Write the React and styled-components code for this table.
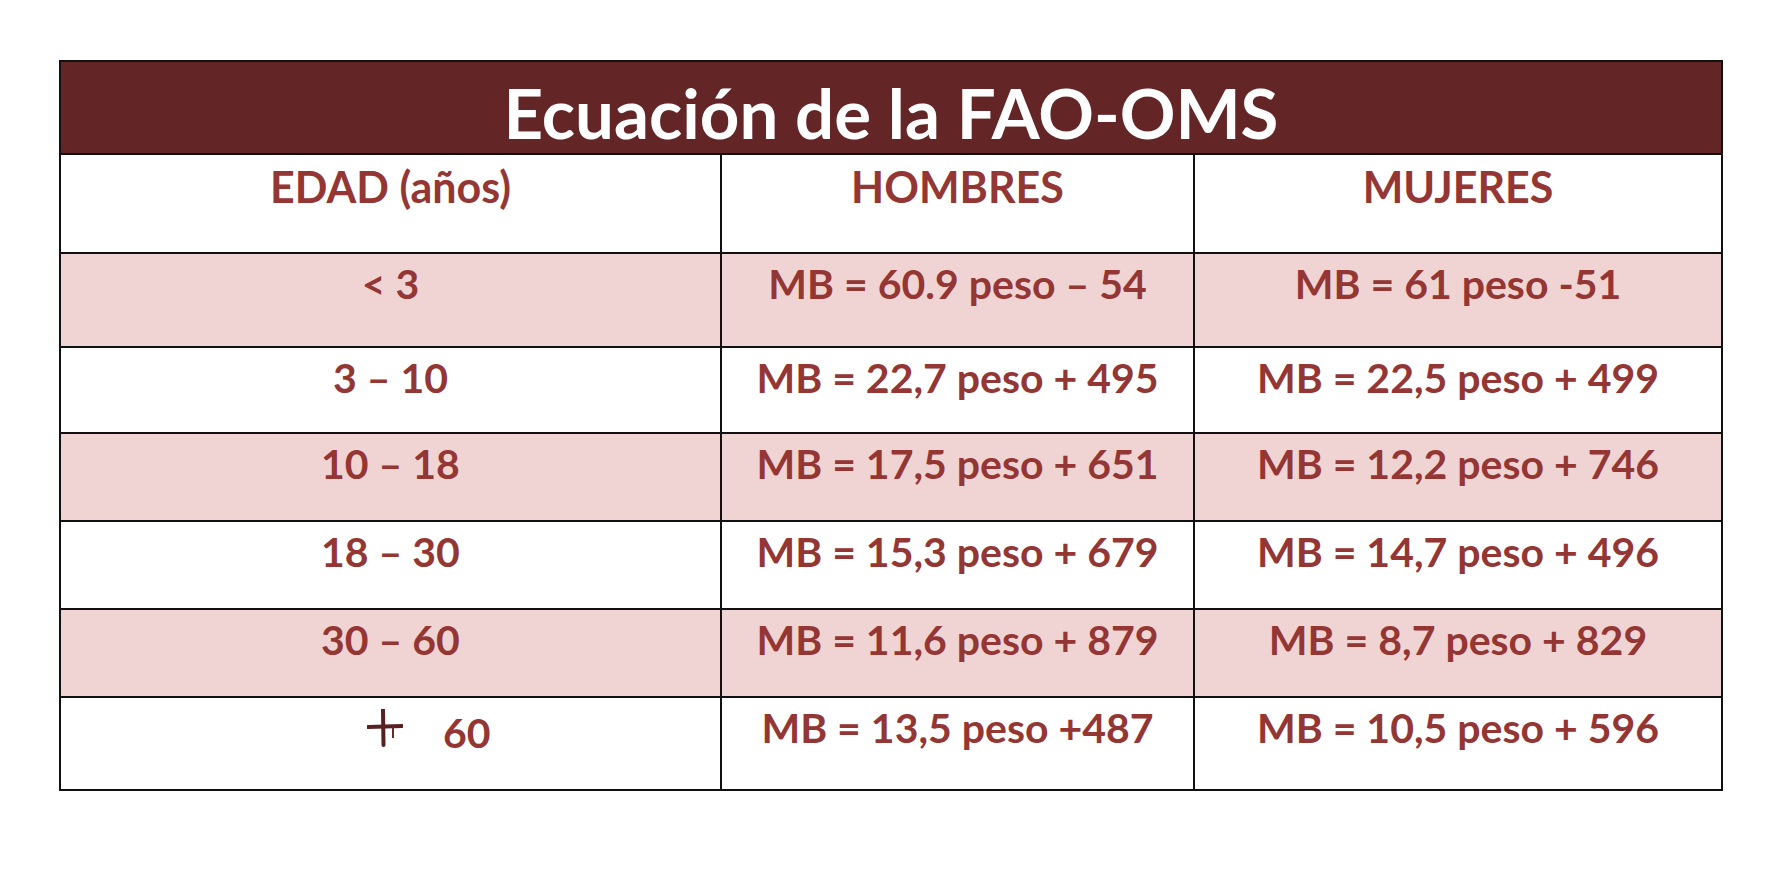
import React from "react";
import styled, { createGlobalStyle } from "styled-components";

const GlobalStyle = createGlobalStyle`
  html, body {
    margin: 0;
    padding: 0;
    background: #fff;
  }
  body {
    font-family: "Lato", "Open Sans", sans-serif;
  }
`;

const Page = styled.div`
  width: 1773px;
  height: 871px;
  padding: 60px 0 0 59px;
  box-sizing: border-box;
  background: #fff;
`;

const Frame = styled.div`
  width: 1664px;
  border-left: 2px solid #111;
  border-right: 2px solid #111;
  border-bottom: 2px solid #111;
  box-sizing: border-box;
`;

const TitleBar = styled.div`
  height: 93px;
  box-sizing: border-box;
  border-top: 2px solid #111;
  background: #642526;
  color: #fff;
  font-weight: 700;
  font-size: 69px;
  line-height: 1;
  text-align: center;
  padding-top: 16px;
`;

const Row = styled.div`
  display: grid;
  grid-template-columns: 659px 473px 528px;
  height: ${(p) => p.$h}px;
  box-sizing: border-box;
  border-top: 2px solid #111;
  background: ${(p) => (p.$shaded ? "#f0d3d3" : "#fff")};
`;

const Cell = styled.div`
  box-sizing: border-box;
  padding-top: ${(p) => p.$top ?? 9}px;
  padding-left: ${(p) => p.$indent ?? 0}px;
  text-align: ${(p) => (p.$indent ? "left" : "center")};
  color: #943634;
  font-weight: 700;
  font-size: ${(p) => (p.$head ? 43 : 41)}px;
  line-height: 1;
  white-space: nowrap;
  & + & {
    border-left: 2px solid #111;
  }
`;

const OverSixty = styled.span`
  display: inline-flex;
  align-items: flex-start;
  gap: 40px;
`;

const Cross = () => (
  <svg width="36" height="38" viewBox="0 0 36 38" style={{ marginTop: 1 }}>
    <path d="M1 18 L35 17" stroke="#5a1f20" strokeWidth="4" strokeLinecap="round" />
    <path d="M16 1 L16.5 36" stroke="#5a1f20" strokeWidth="4" strokeLinecap="round" />
    <path d="M26 18 L26 29" stroke="#6a2a2a" strokeWidth="2" />
  </svg>
);

const rows = [
  { age: "< 3", men: "MB = 60.9 peso – 54", women: "MB = 61 peso -51", h: 94 },
  { age: "3 – 10", men: "MB = 22,7 peso + 495", women: "MB = 22,5 peso + 499", h: 86 },
  { age: "10 – 18", men: "MB = 17,5 peso + 651", women: "MB = 12,2 peso + 746", h: 88 },
  { age: "18 – 30", men: "MB = 15,3 peso + 679", women: "MB = 14,7 peso + 496", h: 88 },
  { age: "30 – 60", men: "MB = 11,6 peso + 879", women: "MB = 8,7 peso + 829", h: 88 },
];

export default function App() {
  return (
    <>
      <GlobalStyle />
      <Page>
        <Frame>
          <TitleBar>Ecuación de la FAO-OMS</TitleBar>
          <Row $h={99}>
            <Cell $head $top={10}>EDAD (años)</Cell>
            <Cell $head $top={10}>HOMBRES</Cell>
            <Cell $head $top={10}>MUJERES</Cell>
          </Row>
          {rows.map((r, i) => (
            <Row key={r.age} $h={r.h} $shaded={i % 2 === 0}>
              <Cell>{r.age}</Cell>
              <Cell>{r.men}</Cell>
              <Cell>{r.women}</Cell>
            </Row>
          ))}
          <Row $h={93}>
            <Cell $indent={306} $top={10}>
              <OverSixty>
                <Cross />
                <span style={{ marginTop: 4 }}>60</span>
              </OverSixty>
            </Cell>
            <Cell>MB = 13,5 peso +487</Cell>
            <Cell>MB = 10,5 peso + 596</Cell>
          </Row>
        </Frame>
      </Page>
    </>
  );
}
